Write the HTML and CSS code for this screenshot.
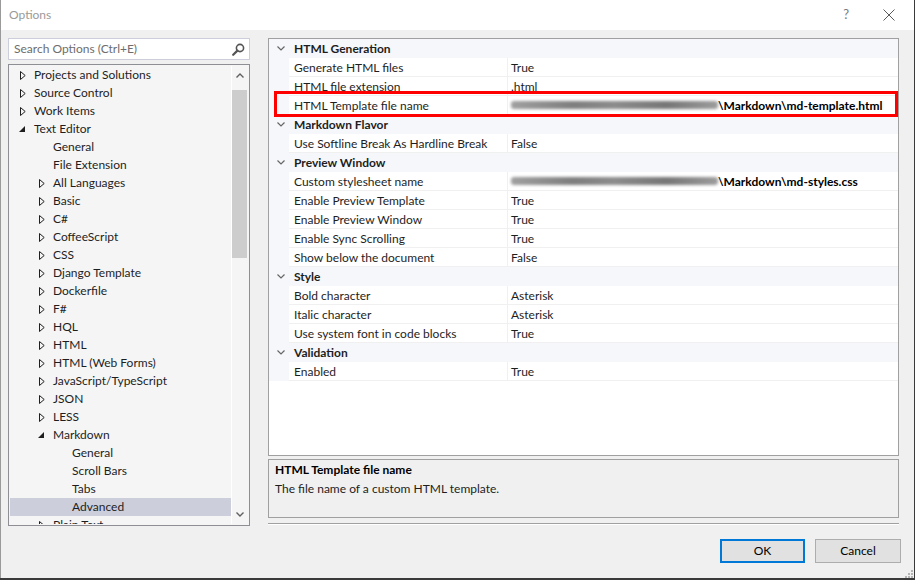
FILE: index.html
```html
<!DOCTYPE html>
<html>
<head>
<meta charset="utf-8">
<link rel="stylesheet" href="styles.css">
</head>
<body>
<div class="window">
  <div class="titlebar">
    <span class="title">Options</span>
    <span class="help">?</span>
    <svg class="close" width="12" height="12" viewBox="0 0 12 12"><path d="M0.5 0.5 L11.5 11.5 M11.5 0.5 L0.5 11.5" stroke="#5a5a5a" stroke-width="1" fill="none"/></svg>
  </div>
  <div class="content">
    <div class="main">
      <div class="left">
        <div class="search">
          <span class="search-text">Search Options (Ctrl+E)</span>
          <svg class="search-icon" width="13" height="13" viewBox="0 0 13 13"><circle cx="8" cy="5" r="3.6" fill="none" stroke="#555" stroke-width="1.6"/><path d="M5.4 7.6 L1.2 11.8" stroke="#555" stroke-width="2.2" stroke-linecap="round"/></svg>
        </div>
        <div class="tree">
          <div class="tree-list">
            <div class="node l0"><span class="exp"><svg width="6" height="9" viewBox="0 0 6 9"><path d="M0.5 0.5 L5.2 4.5 L0.5 8.5 Z" fill="none" stroke="#1e1e1e"/></svg></span>Projects and Solutions</div>
            <div class="node l0"><span class="exp"><svg width="6" height="9" viewBox="0 0 6 9"><path d="M0.5 0.5 L5.2 4.5 L0.5 8.5 Z" fill="none" stroke="#1e1e1e"/></svg></span>Source Control</div>
            <div class="node l0"><span class="exp"><svg width="6" height="9" viewBox="0 0 6 9"><path d="M0.5 0.5 L5.2 4.5 L0.5 8.5 Z" fill="none" stroke="#1e1e1e"/></svg></span>Work Items</div>
            <div class="node l0"><span class="exp open"><svg width="6" height="6" viewBox="0 0 6 6"><path d="M6 0 L6 6 L0 6 Z" fill="#1e1e1e"/></svg></span>Text Editor</div>
            <div class="node l1"><span class="exp"></span>General</div>
            <div class="node l1"><span class="exp"></span>File Extension</div>
            <div class="node l1"><span class="exp"><svg width="6" height="9" viewBox="0 0 6 9"><path d="M0.5 0.5 L5.2 4.5 L0.5 8.5 Z" fill="none" stroke="#1e1e1e"/></svg></span>All Languages</div>
            <div class="node l1"><span class="exp"><svg width="6" height="9" viewBox="0 0 6 9"><path d="M0.5 0.5 L5.2 4.5 L0.5 8.5 Z" fill="none" stroke="#1e1e1e"/></svg></span>Basic</div>
            <div class="node l1"><span class="exp"><svg width="6" height="9" viewBox="0 0 6 9"><path d="M0.5 0.5 L5.2 4.5 L0.5 8.5 Z" fill="none" stroke="#1e1e1e"/></svg></span>C#</div>
            <div class="node l1"><span class="exp"><svg width="6" height="9" viewBox="0 0 6 9"><path d="M0.5 0.5 L5.2 4.5 L0.5 8.5 Z" fill="none" stroke="#1e1e1e"/></svg></span>CoffeeScript</div>
            <div class="node l1"><span class="exp"><svg width="6" height="9" viewBox="0 0 6 9"><path d="M0.5 0.5 L5.2 4.5 L0.5 8.5 Z" fill="none" stroke="#1e1e1e"/></svg></span>CSS</div>
            <div class="node l1"><span class="exp"><svg width="6" height="9" viewBox="0 0 6 9"><path d="M0.5 0.5 L5.2 4.5 L0.5 8.5 Z" fill="none" stroke="#1e1e1e"/></svg></span>Django Template</div>
            <div class="node l1"><span class="exp"><svg width="6" height="9" viewBox="0 0 6 9"><path d="M0.5 0.5 L5.2 4.5 L0.5 8.5 Z" fill="none" stroke="#1e1e1e"/></svg></span>Dockerfile</div>
            <div class="node l1"><span class="exp"><svg width="6" height="9" viewBox="0 0 6 9"><path d="M0.5 0.5 L5.2 4.5 L0.5 8.5 Z" fill="none" stroke="#1e1e1e"/></svg></span>F#</div>
            <div class="node l1"><span class="exp"><svg width="6" height="9" viewBox="0 0 6 9"><path d="M0.5 0.5 L5.2 4.5 L0.5 8.5 Z" fill="none" stroke="#1e1e1e"/></svg></span>HQL</div>
            <div class="node l1"><span class="exp"><svg width="6" height="9" viewBox="0 0 6 9"><path d="M0.5 0.5 L5.2 4.5 L0.5 8.5 Z" fill="none" stroke="#1e1e1e"/></svg></span>HTML</div>
            <div class="node l1"><span class="exp"><svg width="6" height="9" viewBox="0 0 6 9"><path d="M0.5 0.5 L5.2 4.5 L0.5 8.5 Z" fill="none" stroke="#1e1e1e"/></svg></span>HTML (Web Forms)</div>
            <div class="node l1"><span class="exp"><svg width="6" height="9" viewBox="0 0 6 9"><path d="M0.5 0.5 L5.2 4.5 L0.5 8.5 Z" fill="none" stroke="#1e1e1e"/></svg></span>JavaScript/TypeScript</div>
            <div class="node l1"><span class="exp"><svg width="6" height="9" viewBox="0 0 6 9"><path d="M0.5 0.5 L5.2 4.5 L0.5 8.5 Z" fill="none" stroke="#1e1e1e"/></svg></span>JSON</div>
            <div class="node l1"><span class="exp"><svg width="6" height="9" viewBox="0 0 6 9"><path d="M0.5 0.5 L5.2 4.5 L0.5 8.5 Z" fill="none" stroke="#1e1e1e"/></svg></span>LESS</div>
            <div class="node l1"><span class="exp open"><svg width="6" height="6" viewBox="0 0 6 6"><path d="M6 0 L6 6 L0 6 Z" fill="#1e1e1e"/></svg></span>Markdown</div>
            <div class="node l2"><span class="exp"></span>General</div>
            <div class="node l2"><span class="exp"></span>Scroll Bars</div>
            <div class="node l2"><span class="exp"></span>Tabs</div>
            <div class="node l2 selected"><span class="exp"></span>Advanced</div>
            <div class="node l1"><span class="exp"><svg width="6" height="9" viewBox="0 0 6 9"><path d="M0.5 0.5 L5.2 4.5 L0.5 8.5 Z" fill="none" stroke="#1e1e1e"/></svg></span>Plain Text</div>
          </div>
          <div class="vscroll">
            <svg class="arrow" width="8" height="5" viewBox="0 0 8 5"><path d="M0.5 4.5 L4 1 L7.5 4.5" fill="none" stroke="#606060" stroke-width="1.4"/></svg>
            <div class="track"><div class="thumb"></div></div>
            <svg class="arrow" width="8" height="5" viewBox="0 0 8 5"><path d="M0.5 0.5 L4 4 L7.5 0.5" fill="none" stroke="#606060" stroke-width="1.4"/></svg>
          </div>
        </div>
      </div>
      <div class="right">
        <div class="grid">
          <div class="cat"><span class="chev"><svg width="8" height="5" viewBox="0 0 8 5"><path d="M0.5 0.5 L4 4 L7.5 0.5" fill="none" stroke="#666" stroke-width="1.2"/></svg></span>HTML Generation</div>
          <div class="prop"><span class="name">Generate HTML files</span><span class="val">True</span></div>
          <div class="prop"><span class="name">HTML file extension</span><span class="val">.html</span></div>
          <div class="prop"><span class="name">HTML Template file name</span><span class="val"><span class="blur"></span><b>\Markdown\md-template.html</b></span></div>
          <div class="cat"><span class="chev"><svg width="8" height="5" viewBox="0 0 8 5"><path d="M0.5 0.5 L4 4 L7.5 0.5" fill="none" stroke="#666" stroke-width="1.2"/></svg></span>Markdown Flavor</div>
          <div class="prop"><span class="name">Use Softline Break As Hardline Break</span><span class="val">False</span></div>
          <div class="cat"><span class="chev"><svg width="8" height="5" viewBox="0 0 8 5"><path d="M0.5 0.5 L4 4 L7.5 0.5" fill="none" stroke="#666" stroke-width="1.2"/></svg></span>Preview Window</div>
          <div class="prop"><span class="name">Custom stylesheet name</span><span class="val"><span class="blur"></span><b>\Markdown\md-styles.css</b></span></div>
          <div class="prop"><span class="name">Enable Preview Template</span><span class="val">True</span></div>
          <div class="prop"><span class="name">Enable Preview Window</span><span class="val">True</span></div>
          <div class="prop"><span class="name">Enable Sync Scrolling</span><span class="val">True</span></div>
          <div class="prop"><span class="name">Show below the document</span><span class="val">False</span></div>
          <div class="cat"><span class="chev"><svg width="8" height="5" viewBox="0 0 8 5"><path d="M0.5 0.5 L4 4 L7.5 0.5" fill="none" stroke="#666" stroke-width="1.2"/></svg></span>Style</div>
          <div class="prop"><span class="name">Bold character</span><span class="val">Asterisk</span></div>
          <div class="prop"><span class="name">Italic character</span><span class="val">Asterisk</span></div>
          <div class="prop"><span class="name">Use system font in code blocks</span><span class="val">True</span></div>
          <div class="cat"><span class="chev"><svg width="8" height="5" viewBox="0 0 8 5"><path d="M0.5 0.5 L4 4 L7.5 0.5" fill="none" stroke="#666" stroke-width="1.2"/></svg></span>Validation</div>
          <div class="prop"><span class="name">Enabled</span><span class="val">True</span></div>
          <div class="highlight"></div>
        </div>
        <div class="desc">
          <div class="desc-title">HTML Template file name</div>
          <div class="desc-text">The file name of a custom HTML template.</div>
        </div>
        <div class="sep"></div>
      </div>
    </div>
    <div class="buttons">
      <button class="btn default">OK</button>
      <button class="btn">Cancel</button>
    </div>
  </div>
  <svg class="grip" width="9" height="9" viewBox="0 0 9 9"><g fill="#b4b4b4"><rect x="7" y="1" width="2" height="2"/><rect x="4" y="4" width="2" height="2"/><rect x="7" y="4" width="2" height="2"/><rect x="1" y="7" width="2" height="2"/><rect x="4" y="7" width="2" height="2"/><rect x="7" y="7" width="2" height="2"/></g></svg>
</div>
</body>
</html>
```

FILE: styles.css
```css
* { box-sizing: border-box; }
html, body { margin: 0; padding: 0; }
body {
  width: 915px;
  height: 580px;
  background: #3a3a3a;
  font-family: "Segoe UI", Lato, "Noto Sans", sans-serif;
  font-size: 12px;
  color: #1e1e1e;
  overflow: hidden;
}
.window {
  position: relative;
  width: 914px;
  height: 578px;
  background: #f0f0f0;
  border-left: 1px solid #9a9a9a;
  display: flex;
  flex-direction: column;
}
.titlebar {
  height: 30px;
  background: #ffffff;
  display: flex;
  align-items: center;
  padding-left: 8px;
  padding-bottom: 2px;
  flex: none;
}
.title { color: #9a9a9a; font-size: 12px; flex: 1; }
.help { color: #7a7a7a; font-size: 13px; margin-right: 34px; }
.close { margin-right: 19px; margin-top: 2px; }

.content {
  flex: 1;
  display: flex;
  flex-direction: column;
  padding: 8px 0 0 7px;
}
.main {
  display: flex;
  height: 488px;
  gap: 18px;
}
.left {
  width: 242px;
  display: flex;
  flex-direction: column;
  gap: 4px;
}
.search {
  height: 22px;
  background: #fff;
  border: 1px solid #cccedb;
  display: flex;
  align-items: center;
  padding: 0 4px 1px 5px;
}
.search-text { flex: 1; color: #6d6d6d; }
.search-icon { margin-top: 1px; }
.tree {
  height: 462px;
  border: 1px solid #8e8f94;
  background: #f5f5f5;
  padding: 1px;
  display: flex;
  overflow: hidden;
}
.tree-list { flex: 1; overflow: hidden; }
.node {
  height: 18px;
  line-height: 18px;
  display: flex;
  align-items: center;
  white-space: nowrap;
}
.node.l0 { padding-left: 7px; }
.node.l1 { padding-left: 26px; }
.node.l2 { padding-left: 45px; }
.node.selected { background: #cccedb; }
.exp {
  width: 17px;
  flex: none;
  display: flex;
  align-items: center;
  padding-left: 3px;
}
.exp.open { padding-left: 2px; margin-top: -1px; }
.vscroll {
  width: 17px;
  flex: none;
  display: flex;
  flex-direction: column;
  align-items: center;
  border-left: 1px solid #fff;
}
.vscroll .arrow { flex: none; margin: 7px 0 8px; }
.vscroll .arrow:last-child { margin: 8px 0 7px; }
.track { flex: 1; width: 100%; padding: 4px 1px 0 0; }
.thumb { height: 168px; background: #cdcdcd; }

.right {
  width: 631px;
  display: flex;
  flex-direction: column;
}
.grid {
  position: relative;
  height: 418px;
  border: 1px solid #a0a0a0;
  background: #fff;
}
.cat {
  height: 19px;
  background: #f5f7fa;
  display: flex;
  align-items: center;
  font-weight: bold;
}
.chev {
  width: 25px;
  flex: none;
  display: flex;
  padding-left: 8px;
}
.prop {
  height: 19px;
  display: flex;
  background: #f5f7fa;
  padding-left: 20px;
}
.prop .name, .prop .val {
  background: #fff;
  border-bottom: 1px solid #f0f0f0;
  line-height: 18px;
  padding-top: 1px;
  white-space: nowrap;
  overflow: hidden;
}
.prop .name {
  width: 219px;
  flex: none;
  padding-left: 5px;
  border-right: 1px solid #f0f0f0;
}
.prop .val {
  flex: 1;
  padding-left: 3px;
}
.prop .val b { color: #000; }
.blur {
  display: inline-block;
  vertical-align: middle;
  margin-top: -3px;
  width: 207px;
  height: 8px;
  background: linear-gradient(90deg, #a0a0a0, #7e7e7e 30%, #8c8c8c 50%, #767676 75%, #9c9c9c 100%);
  filter: blur(1.5px);
  border-radius: 3px;
}
.highlight {
  position: absolute;
  left: 5px;
  top: 52px;
  width: 624px;
  height: 26px;
  border: 3px solid #ff0000;
  pointer-events: none;
}
.desc {
  margin-top: 3px;
  height: 59px;
  border: 1px solid #a0a0a0;
  background: #f0f0f0;
  padding: 1px 6px;
}
.desc-title { font-weight: bold; line-height: 18px; color: #000; }
.desc-text { line-height: 19px; }
.sep {
  margin-top: 5px;
  height: 2px;
  border-top: 1px solid #a0a0a0;
  border-bottom: 1px solid #fff;
}

.buttons {
  display: flex;
  justify-content: flex-end;
  gap: 10px;
  margin-top: 13px;
  padding-right: 13px;
}
.btn {
  height: 24px;
  width: 86px;
  background: #e1e1e1;
  border: 1px solid #adadad;
  font-family: inherit;
  font-size: 12px;
  color: #000;
  padding: 0 0 2px;
}
.btn.default { border: 2px solid #0078d7; width: 85px; }
.grip {
  position: absolute;
  right: 1px;
  bottom: 0;
}
```
